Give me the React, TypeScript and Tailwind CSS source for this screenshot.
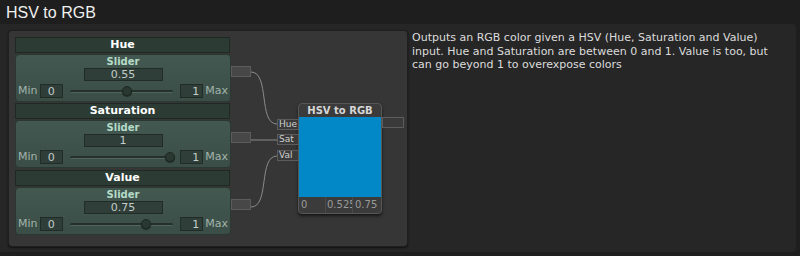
import React from 'react';

type SliderNodeProps = {
  title: string;
  value: string;
  pos: number; // thumb position in 0..1
  top: string;
};

const SliderNode: React.FC<SliderNodeProps> = ({ title, value, pos, top }) => (
  <div className={`absolute left-[6px] ${top} w-[237px] h-[65px]`}>
    <div className="w-[215px] h-[16px] bg-[#2d3b35] border border-[#1f2924] text-white text-[11px] font-bold leading-[14px] text-center">
      {title}
    </div>
    <div className="mt-px w-[216px] h-[48px] rounded-[4px] border border-[#2a3831] bg-gradient-to-b from-[#435850] to-[#3a4e47] flex flex-col items-center">
      <div className="text-[10px] font-bold text-[#b5dcc8] leading-[12px] mt-px">Slider</div>
      <div className="w-[79px] h-[13px] bg-[#2f3e38] border border-[#212c27] text-[11px] leading-[11px] text-[#c3ccc8] text-center">
        {value}
      </div>
      <div className="w-full flex items-center mt-[3px] px-[2px] text-[11px] text-[#a2b3ac] leading-[14px]">
        <span className="w-[22px]">Min</span>
        <div className="w-[23px] h-[14px] bg-[#2f3e38] border border-[#212c27] text-center text-[#c3ccc8]">0</div>
        <div className="relative ml-[7px] w-[105px] h-[14px]">
          <div className="absolute left-0 right-0 top-[6px] h-[3px] rounded-full bg-[#25302b] border-b border-[#4f655d]" />
          <div
            className="absolute top-[2px] w-[10px] h-[10px] rounded-full bg-[#2a3832] border border-[#1d2723] shadow-[0_1px_1px_rgba(0,0,0,0.5)]"
            style={{ left: `${pos * 95}px` }}
          />
        </div>
        <div className="ml-[7px] w-[23px] h-[14px] bg-[#2f3e38] border border-[#212c27] text-right pr-[3px] text-[#c3ccc8]">1</div>
        <span className="ml-[2px]">Max</span>
      </div>
    </div>
    <div className="absolute left-[216px] top-[29px] w-[20px] h-[11px] bg-[#474747] border border-[#5c5c5c]" />
  </div>
);

const Port: React.FC<{ label: string; top: string }> = ({ label, top }) => (
  <div className={`absolute left-[268px] ${top} w-[22px] h-[11px] bg-[#3a3a3a] border border-[#5c5c5c] text-[9px] leading-[9px] pl-px text-[#d0d0d0] overflow-hidden whitespace-nowrap`}>
    {label}
  </div>
);

export default function App() {
  return (
    <div className="w-[800px] h-[256px] bg-[#1e1e1e] overflow-hidden font-['DejaVu_Sans',sans-serif]">
      <div className="h-[24px] px-[6px] text-[16px] leading-[26px] text-[#f0f0f0] font-['Liberation_Sans',sans-serif]">
        HSV to RGB
      </div>
      <div className="w-[796px] h-[228px] rounded-r-[4px] bg-[#262626] flex pt-[6px] pl-[8px]">
        <div className="relative w-[400px] h-[217px] rounded-[4px] bg-[#363636] border border-[#1f1f1f] shadow-[0_1px_2px_rgba(0,0,0,0.6)]">
          <svg className="absolute inset-0" width="400" height="217">
            <g fill="none" stroke="#8a8a8a" strokeWidth="1">
              <path d="M242 41 C261 41 249 93 268 93" />
              <path d="M242 109 L268 109" />
              <path d="M242 176 C261 176 249 125 268 125" />
            </g>
          </svg>
          <SliderNode title="Hue" value="0.55" pos={0.55} top="top-[6px]" />
          <SliderNode title="Saturation" value="1" pos={1} top="top-[72px]" />
          <SliderNode title="Value" value="0.75" pos={0.75} top="top-[139px]" />

          <div className="absolute left-[289px] top-[72px] w-[84px] h-[111px] rounded-[4px] bg-[#3b3b3b] border border-[#565656] shadow-[0_2px_3px_rgba(0,0,0,0.6)] flex flex-col overflow-hidden">
            <div className="h-[13px] text-[10px] font-bold leading-[13px] text-center text-[#d6d6d6]">HSV to RGB</div>
            <div className="h-[80px] bg-[#0288c7]" />
            <div className="flex h-[16px] text-[10px] leading-[15px] text-[#9a9a9a]">
              <div className="w-[27px] border-r border-[#4a4a4a] pl-[2px]">0</div>
              <div className="w-[27px] border-r border-[#4a4a4a] pl-[1px] overflow-hidden whitespace-nowrap">0.525</div>
              <div className="flex-1 pl-[2px]">0.75</div>
            </div>
          </div>
          <Port label="Hue" top="top-[88px]" />
          <Port label="Sat" top="top-[103px]" />
          <Port label="Val" top="top-[119px]" />
          <div className="absolute left-[373px] top-[86px] w-[22px] h-[11px] bg-[#3a3a3a] border border-[#5c5c5c]" />
        </div>
        <p className="ml-[4px] w-[356px] text-[11px] leading-[13.5px] text-[#dcdcdc] pt-[1px]">
          Outputs an RGB color given a HSV (Hue, Saturation and Value) input. Hue and Saturation are between 0 and 1. Value is too, but can go beyond 1 to overexpose colors
        </p>
      </div>
    </div>
  );
}
